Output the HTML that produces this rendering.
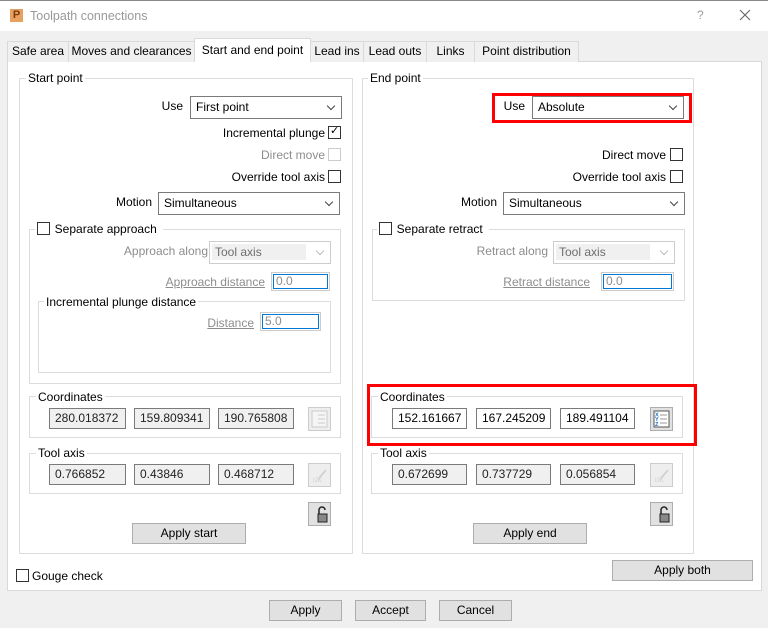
<!DOCTYPE html>
<html><head><meta charset="utf-8">
<style>
*{box-sizing:border-box;margin:0;padding:0}
body{width:768px;height:628px;background:#f0f0f0;font-family:"Liberation Sans",sans-serif;font-size:12px;color:#000;position:relative;overflow:hidden}
.a{position:absolute;white-space:nowrap;line-height:14px}
.r{position:absolute;white-space:nowrap;line-height:14px;text-align:right}
.g{color:#8d8d8d}
.u{text-decoration:underline}
.gb{position:absolute;border:1px solid #dcdcdc}
.lbl{position:absolute;background:#fff;padding:0 2px;line-height:14px;white-space:nowrap}
.cb{position:absolute;width:13px;height:13px;border:1px solid #333;background:#fff}
.cbd{border-color:#ccc}
.combo{position:absolute;border:1px solid #7a7a7a;background:#fff;padding-left:5px;line-height:20px}
.combo:after{content:"";position:absolute;right:7px;top:6px;width:5px;height:5px;border-right:1px solid #444;border-bottom:1px solid #444;transform:rotate(45deg)}
.dis{border-color:#ccc;background:#fff}
.dis span{display:block;background:#f0f0f0;margin:2px 24px 2px -3px;padding-left:3px;line-height:16px;color:#6d6d6d}
.dis:after{border-color:#bbb}
.fld{position:absolute;border:1px solid #7a7a7a;background:#f0f0f0;height:21px;line-height:19px;padding-left:5px;color:#222}
.fw{background:#fff;color:#000}
.inp{position:absolute;border:1px solid #ccc;height:19px;padding:1px}
.inp div{border:1px solid #0078d7;height:15px;line-height:13px;padding-left:2px;color:#8d8d8d}
.btn{position:absolute;border:1px solid #adadad;background:#e1e1e1;text-align:center;line-height:19px;height:21px}
.ib{position:absolute;width:23px;height:24px;border:1px solid #adadad;background:#e1e1e1}
.red{position:absolute;border:3px solid #f00}
.tab{position:absolute;top:41px;height:21px;border:1px solid #d9d9d9;border-bottom:none;background:#f0f0f0;text-align:center;line-height:19px}
</style></head><body>
<div style="position:absolute;left:0;top:0;width:768px;height:31px;background:#fff;border-top:1px solid #888"></div>
<div style="position:absolute;left:10px;top:9px;width:13px;height:13px;background:#e8a060;color:#7a3b0a;font-weight:bold;font-size:11px;line-height:13px;text-align:center">P</div>
<div class="a" style="left:30px;top:9px;color:#999;font-size:12.5px">Toolpath connections</div>
<div class="a" style="left:697px;top:8px;color:#999">?</div>
<svg style="position:absolute;left:739px;top:9px" width="12" height="12"><path d="M1 1L11 11M11 1L1 11" stroke="#666" stroke-width="1.1"/></svg>
<div style="position:absolute;left:7px;top:61px;width:755px;height:530px;background:#fff;border:1px solid #d9d9d9"></div>
<div class="tab" style="left:7px;width:62px">Safe area</div>
<div class="tab" style="left:68px;width:127px">Moves and clearances</div>
<div class="tab" style="left:194px;width:117px;top:38px;height:24px;background:#fff;line-height:22px">Start and end point</div>
<div class="tab" style="left:310px;width:54px">Lead ins</div>
<div class="tab" style="left:363px;width:64px">Lead outs</div>
<div class="tab" style="left:426px;width:49px">Links</div>
<div class="tab" style="left:474px;width:105px">Point distribution</div>

<div class="gb" style="left:19px;top:78px;width:334px;height:476px"></div>
<div class="lbl" style="left:26px;top:71px">Start point</div>
<div class="r" style="right:585px;top:99px">Use</div>
<div class="combo" style="left:190px;top:96px;width:152px;height:23px">First point</div>
<div class="r" style="right:443px;top:126px">Incremental plunge</div>
<div class="cb" style="left:328px;top:126px"></div>
<div class="a" style="left:330px;top:124px;font-size:11px">✓</div>
<div class="r g" style="right:443px;top:148px">Direct move</div>
<div class="cb cbd" style="left:328px;top:148px"></div>
<div class="r" style="right:443px;top:170px">Override tool axis</div>
<div class="cb" style="left:328px;top:170px"></div>
<div class="r" style="right:616px;top:195px">Motion</div>
<div class="combo" style="left:158px;top:192px;width:182px;height:23px">Simultaneous</div>

<div class="gb" style="left:29px;top:229px;width:312px;height:155px"></div>
<div class="lbl" style="left:35px;top:222px;padding-left:0;padding-right:6px"><span class="cb" style="position:relative;display:inline-block;vertical-align:-2px;left:2px"></span> &nbsp;Separate approach</div>
<div class="r g" style="right:560px;top:244px">Approach along</div>
<div class="combo dis" style="left:209px;top:241px;width:122px;height:23px"><span>Tool axis</span></div>
<div class="r g u" style="right:503px;top:275px">Approach distance</div>
<div class="inp" style="left:271px;top:272px;width:59px"><div>0.0</div></div>
<div class="gb" style="left:38px;top:301px;width:293px;height:72px"></div>
<div class="lbl" style="left:44px;top:295px">Incremental plunge distance</div>
<div class="r g u" style="right:514px;top:316px">Distance</div>
<div class="inp" style="left:260px;top:312px;width:61px"><div>5.0</div></div>

<div class="gb" style="left:29px;top:396px;width:312px;height:42px"></div>
<div class="lbl" style="left:36px;top:390px">Coordinates</div>
<div class="fld" style="left:49px;top:408px;width:77px">280.018372</div>
<div class="fld" style="left:134px;top:408px;width:76px">159.809341</div>
<div class="fld" style="left:218px;top:408px;width:76px">190.765808</div>
<div class="ib" style="left:308px;top:407px;border-color:#ccc;background:#eee"><svg width="21" height="22"><rect x="3" y="3" width="15" height="16" fill="#f5f5f5" stroke="#ccc"/><g stroke="#ccc"><line x1="9" y1="7" x2="16" y2="7"/><line x1="9" y1="11" x2="16" y2="11"/><line x1="9" y1="15" x2="16" y2="15"/></g></svg></div>

<div class="gb" style="left:29px;top:453px;width:312px;height:41px"></div>
<div class="lbl" style="left:36px;top:446px">Tool axis</div>
<div class="fld" style="left:49px;top:464px;width:77px">0.766852</div>
<div class="fld" style="left:134px;top:464px;width:76px">0.43846</div>
<div class="fld" style="left:218px;top:464px;width:76px">0.468712</div>
<div class="ib" style="left:308px;top:463px;border-color:#ccc;background:#eee"><svg width="21" height="22"><line x1="10" y1="14" x2="17" y2="6" stroke="#ccc" stroke-width="1.5"/><text x="4" y="18" font-size="6" fill="#ccc">IJK</text></svg></div>
<div class="ib" style="left:308px;top:502px"><svg width="21" height="22"><path d="M10 14 V7 a3 3 0 1 1 6 0" fill="none" stroke="#222" stroke-width="1.5"/><rect x="9" y="11" width="9" height="8" fill="#888" stroke="#222"/></svg></div>
<div class="btn" style="left:132px;top:523px;width:114px">Apply start</div>

<div class="gb" style="left:362px;top:78px;width:332px;height:476px"></div>
<div class="lbl" style="left:368px;top:71px">End point</div>
<div class="r" style="right:243px;top:99px">Use</div>
<div class="combo" style="left:532px;top:96px;width:152px;height:23px">Absolute</div>
<div class="red" style="left:492px;top:93px;width:200px;height:30px"></div>
<div class="r" style="right:102px;top:148px">Direct move</div>
<div class="cb" style="left:670px;top:148px"></div>
<div class="r" style="right:102px;top:170px">Override tool axis</div>
<div class="cb" style="left:670px;top:170px"></div>
<div class="r" style="right:271px;top:195px">Motion</div>
<div class="combo" style="left:503px;top:192px;width:182px;height:23px">Simultaneous</div>
<div class="gb" style="left:372px;top:229px;width:313px;height:72px"></div>
<div class="lbl" style="left:377px;top:222px;padding-left:0;padding-right:6px"><span class="cb" style="position:relative;display:inline-block;vertical-align:-2px;left:2px"></span> &nbsp;Separate retract</div>
<div class="r g" style="right:220px;top:244px">Retract along</div>
<div class="combo dis" style="left:553px;top:241px;width:122px;height:23px"><span>Tool axis</span></div>
<div class="r g u" style="right:178px;top:275px">Retract distance</div>
<div class="inp" style="left:601px;top:272px;width:73px"><div>0.0</div></div>

<div class="gb" style="left:371px;top:396px;width:312px;height:42px"></div>
<div class="lbl" style="left:378px;top:390px">Coordinates</div>
<div class="fld fw" style="left:392px;top:408px;width:75px">152.161667</div>
<div class="fld fw" style="left:476px;top:408px;width:75px">167.245209</div>
<div class="fld fw" style="left:560px;top:408px;width:75px">189.491104</div>
<div class="ib" style="left:650px;top:407px"><svg width="21" height="22"><rect x="3" y="3" width="15" height="16" fill="#fff" stroke="#555"/><g stroke="#999"><line x1="9" y1="7" x2="16" y2="7"/><line x1="9" y1="11" x2="16" y2="11"/><line x1="9" y1="15" x2="16" y2="15"/></g><text x="4" y="18" font-size="5.5" fill="#1a6fc9" font-weight="bold">Z</text><text x="4" y="13" font-size="5.5" fill="#1a6fc9" font-weight="bold">Y</text><text x="4" y="8.5" font-size="5.5" fill="#1a6fc9" font-weight="bold">X</text></svg></div>
<div class="red" style="left:367px;top:384px;width:330px;height:62px"></div>

<div class="gb" style="left:371px;top:453px;width:312px;height:41px"></div>
<div class="lbl" style="left:378px;top:446px">Tool axis</div>
<div class="fld" style="left:392px;top:464px;width:75px">0.672699</div>
<div class="fld" style="left:476px;top:464px;width:75px">0.737729</div>
<div class="fld" style="left:560px;top:464px;width:75px">0.056854</div>
<div class="ib" style="left:650px;top:463px;border-color:#ccc;background:#eee"><svg width="21" height="22"><line x1="10" y1="14" x2="17" y2="6" stroke="#ccc" stroke-width="1.5"/><text x="4" y="18" font-size="6" fill="#ccc">IJK</text></svg></div>
<div class="ib" style="left:650px;top:502px"><svg width="21" height="22"><path d="M10 14 V7 a3 3 0 1 1 6 0" fill="none" stroke="#222" stroke-width="1.5"/><rect x="9" y="11" width="9" height="8" fill="#888" stroke="#222"/></svg></div>
<div class="btn" style="left:473px;top:523px;width:114px">Apply end</div>

<div class="cb" style="left:16px;top:569px"></div>
<div class="a" style="left:32px;top:569px">Gouge check</div>
<div class="btn" style="left:612px;top:560px;width:141px">Apply both</div>
<div class="btn" style="left:269px;top:600px;width:73px">Apply</div>
<div class="btn" style="left:355px;top:600px;width:71px">Accept</div>
<div class="btn" style="left:439px;top:600px;width:73px">Cancel</div>
</body></html>
